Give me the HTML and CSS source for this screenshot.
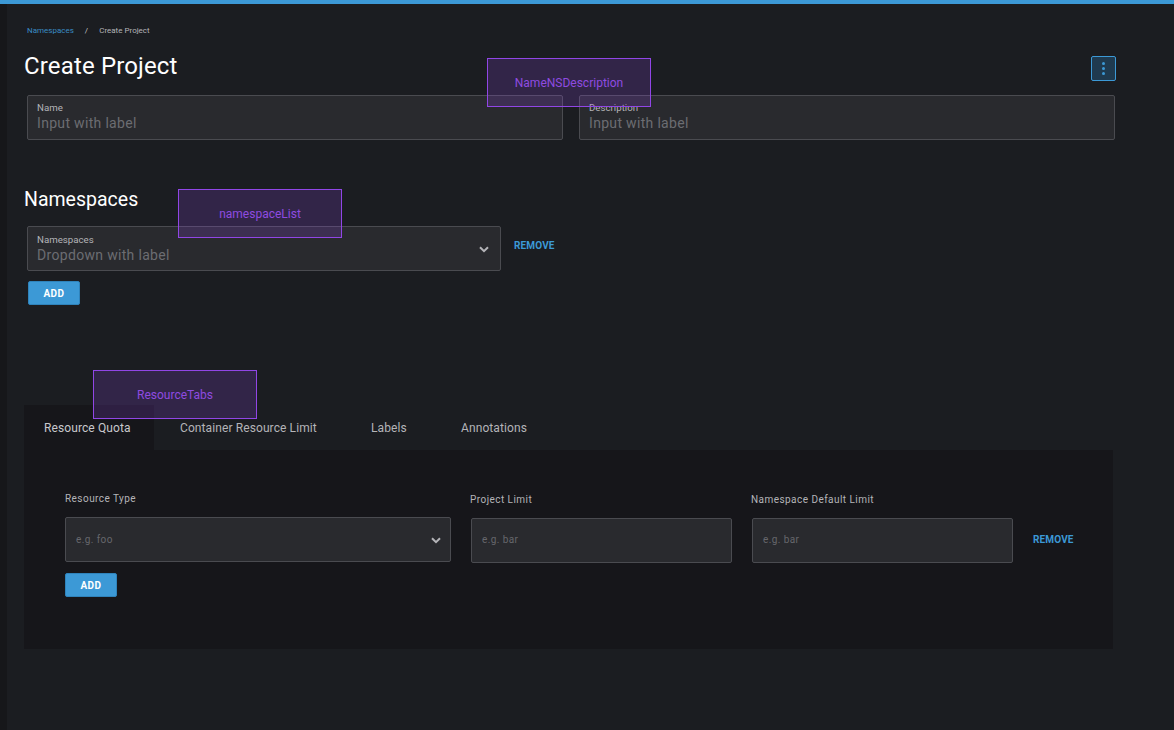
FILE: index.html
```html
<!DOCTYPE html>
<html lang="en">
<head>
<meta charset="utf-8">
<title>Create Project</title>
<link rel="stylesheet" href="styles.css">
</head>
<body>
<div class="topbar"></div>
<div class="shell">
  <div class="rail"></div>
  <main class="main">
    <nav class="crumbs"><a class="crumb-link">Namespaces</a><span class="crumb-sep">/</span><span class="crumb-current">Create Project</span></nav>
    <div class="title-row">
      <h1 class="title">Create Project</h1>
      <button class="kebab" aria-label="Menu"><span class="dot"></span><span class="dot"></span><span class="dot"></span></button>
    </div>
    <section class="name-row">
      <div class="field grow"><div class="field-label">Name</div><div class="field-ph">Input with label</div></div>
      <div class="field grow"><div class="field-label">Description</div><div class="field-ph">Input with label</div></div>
    </section>
    <h2 class="heading">Namespaces</h2>
    <section class="ns-row">
      <div class="field ns-field"><div class="field-label">Namespaces</div><div class="field-ph">Dropdown with label</div>
        <svg class="chev" viewBox="0 0 10 7"><path d="M1 1.2 5 5.2 9 1.2"/></svg></div>
      <a class="remove ns-remove">REMOVE</a>
    </section>
    <button class="add ns-add">ADD</button>
    <div class="tabs">
      <div class="tab tab-1 active">Resource Quota</div>
      <div class="tab tab-2">Container Resource Limit</div>
      <div class="tab tab-3">Labels</div>
      <div class="tab tab-4">Annotations</div>
    </div>
    <section class="panel">
      <div class="quota-row">
        <div class="col col-type">
          <div class="col-label">Resource Type</div>
          <div class="box"><span class="box-ph">e.g. foo</span><svg class="chev" viewBox="0 0 10 7"><path d="M1 1.2 5 5.2 9 1.2"/></svg></div>
        </div>
        <div class="col col-limit">
          <div class="col-label">Project Limit</div>
          <div class="box"><span class="box-ph">e.g. bar</span></div>
        </div>
        <div class="col col-limit">
          <div class="col-label">Namespace Default Limit</div>
          <div class="box"><span class="box-ph">e.g. bar</span></div>
        </div>
        <a class="remove quota-remove">REMOVE</a>
      </div>
      <button class="add quota-add">ADD</button>
    </section>
  </main>
</div>
<div class="note note-a">NameNSDescription</div>
<div class="note note-b">namespaceList</div>
<div class="note note-c">ResourceTabs</div>
</body>
</html>
```
FILE: styles.css
```css
* { box-sizing: border-box; }
html, body { margin: 0; height: 100%; }
body {
  background: #1b1d21;
  color: #fff;
  font-family: Roboto, "Noto Sans", sans-serif;
  overflow: hidden;
  position: relative;
}
.topbar { height: 4px; background: #3c99d6; }
.shell { display: flex; height: 726px; }
.rail { width: 7px; background: #16171a; }
.main { flex: 1; padding: 0 58px 0 17px; }

.crumbs { display: flex; height: 12px; margin: 20px 0 0 3px; font-size: 8px; line-height: 13px; }
.crumb-link { color: #3a8cc4; }
.crumb-sep { color: #c4c4c8; margin: 0 11px; }
.crumb-current { color: #b4b4b8; }

.title-row { display: flex; justify-content: space-between; align-items: flex-start; height: 30px; margin-top: 15px; }
.title { margin: 0; font-size: 24px; font-weight: 400; line-height: 30px; letter-spacing: .15px; color: #fff; }
.kebab {
  display: flex; flex-direction: column; align-items: center; justify-content: center; gap: 2px;
  width: 25px; height: 25px; margin-top: 5px; padding: 0;
  background: #1f3a4f; border: 1px solid #3c99d6; border-radius: 2px;
}
.dot { width: 3px; height: 3px; border-radius: 50%; background: #3c99d6; }

.name-row { display: flex; gap: 16px; margin: 14px 1px 0 3px; }
.field {
  position: relative; height: 45px; padding: 6px 9px 0;
  background: #292a2e; border: 1px solid #4a4b50; border-radius: 2px;
}
.grow { flex: 1; }
.field-label { font-size: 9.7px; line-height: 12px; color: #b4b4b8; }
.field-ph { font-size: 14px; line-height: 16px; margin-top: 1px; color: #6c6d72; letter-spacing: .32px; }

.heading { margin: 48px 0 0; font-size: 19.5px; font-weight: 400; line-height: 24px; color: #fff; }
.ns-row { display: flex; align-items: flex-start; gap: 13px; margin: 14px 0 0 3px; }
.ns-field { width: 474px; padding-top: 7px; }
.chev { position: absolute; right: 11px; top: 50%; width: 10px; height: 7px; margin-top: -3px; fill: none; stroke: #b4b4b8; stroke-width: 2; }
.remove { font-size: 10px; font-weight: 700; line-height: 12px; letter-spacing: .15px; color: #3c99d6; }
.ns-remove { margin-top: 14px; }
.add {
  display: block; height: 24px; width: 52px; padding: 0;
  background: #3c99d6; border: 1px solid #2f83bb; border-radius: 2px;
  font: 700 10px Roboto, sans-serif; letter-spacing: .5px; color: #fff;
}
.ns-add { margin: 10px 0 0 4px; }

.tabs { display: flex; height: 45px; margin-top: 100px; }
.tab { font-size: 12px; line-height: 46px; letter-spacing: .1px; color: #b4b4b8; white-space: nowrap; }
.tab-1 { width: 130px; padding-left: 20px; }
.tab-2 { width: 191px; padding-left: 26px; }
.tab-3 { width: 90px; padding-left: 26px; }
.tab-4 { padding-left: 26px; }
.active { background: #16161a; color: #c8c8cc; }

.panel { width: 1089px; height: 199px; padding: 40px 0 0 41px; background: #16161a; }
.quota-row { display: flex; gap: 20px; }
.col-label { height: 17px; font-size: 10px; line-height: 17px; letter-spacing: .45px; color: #b4b4b8; white-space: nowrap; }
.col-type { width: 386px; }
.col-limit { width: 261px; padding-top: 1px; }
.col-limit .col-label { margin-left: -1px; }
.box {
  position: relative; display: flex; align-items: center; height: 45px; margin-top: 10px; padding: 0 0 2px 10px;
  background: #292a2e; border: 1px solid #4a4b50; border-radius: 2px;
}
.col-type .box { padding-bottom: 0; }
.box .chev { right: 9px; }
.box-ph { font-size: 10px; letter-spacing: .4px; color: #66676c; }
.quota-remove { align-self: flex-start; margin-top: 44px; }
.quota-add { margin-top: 10px; }

.note {
  position: absolute; display: flex; align-items: center; justify-content: center;
  width: 164px; height: 49px;
  background: rgba(145, 70, 230, .2); border: 1px solid #9146e6;
  font-size: 12px; color: #8f4be0;
}
.note-a { left: 487px; top: 58px; }
.note-b { left: 178px; top: 189px; }
.note-c { left: 93px; top: 370px; }
```
